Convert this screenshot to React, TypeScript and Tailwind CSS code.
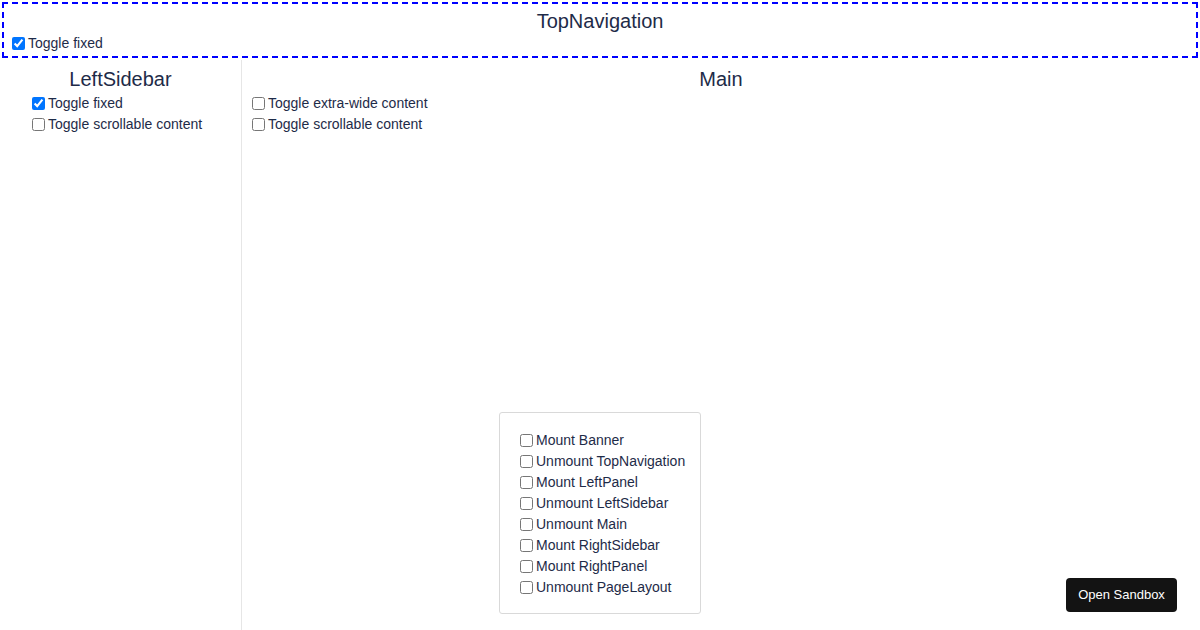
import React from "react";

const Check = ({ label, checked = false }: { label: string; checked?: boolean }) => (
  <label className="flex items-center h-[21px] text-[14px] leading-[21px]">
    <input type="checkbox" defaultChecked={checked} className="m-0 mr-[3px] w-[13px] h-[13px] accent-[#0075ff]" />
    <span>{label}</span>
  </label>
);

export default function App() {
  return (
    <div className="relative w-[1200px] h-[630px] overflow-hidden bg-white text-[#1e2b48]" style={{ fontFamily: '"Liberation Sans", Arial, sans-serif' }}>
      <div className="p-[2px]">
        <div className="border-2 border-dashed border-[#0000ff] h-[56px] px-[8px] pt-[5px]">
          <div className="text-center text-[20px] leading-[24px]">TopNavigation</div>
          <div>
            <Check label="Toggle fixed" checked />
          </div>
        </div>
      </div>
      <div className="flex h-[570px]">
        <div className="w-[242px] shrink-0 border-r border-[#e6e6e6] pt-[7px]">
          <div className="text-center text-[20px] leading-[24px]">LeftSidebar</div>
          <div className="pl-[32px] mt-[2px]">
            <Check label="Toggle fixed" checked />
            <Check label="Toggle scrollable content" />
          </div>
        </div>
        <div className="flex-1 pt-[7px]">
          <div className="text-center text-[20px] leading-[24px]">Main</div>
          <div className="pl-[10px] mt-[2px]">
            <Check label="Toggle extra-wide content" />
            <Check label="Toggle scrollable content" />
          </div>
        </div>
      </div>
      <div className="absolute left-[499px] top-[412px] w-[202px] h-[202px] border border-[#d9d9d9] rounded-[3px] bg-white pl-[20px] pt-[17px]">
        <Check label="Mount Banner" />
        <Check label="Unmount TopNavigation" />
        <Check label="Mount LeftPanel" />
        <Check label="Unmount LeftSidebar" />
        <Check label="Unmount Main" />
        <Check label="Mount RightSidebar" />
        <Check label="Mount RightPanel" />
        <Check label="Unmount PageLayout" />
      </div>
      <button className="absolute left-[1066px] top-[578px] w-[111px] h-[34px] rounded-[4px] bg-[#131313] text-white text-[13px]">
        Open Sandbox
      </button>
    </div>
  );
}
